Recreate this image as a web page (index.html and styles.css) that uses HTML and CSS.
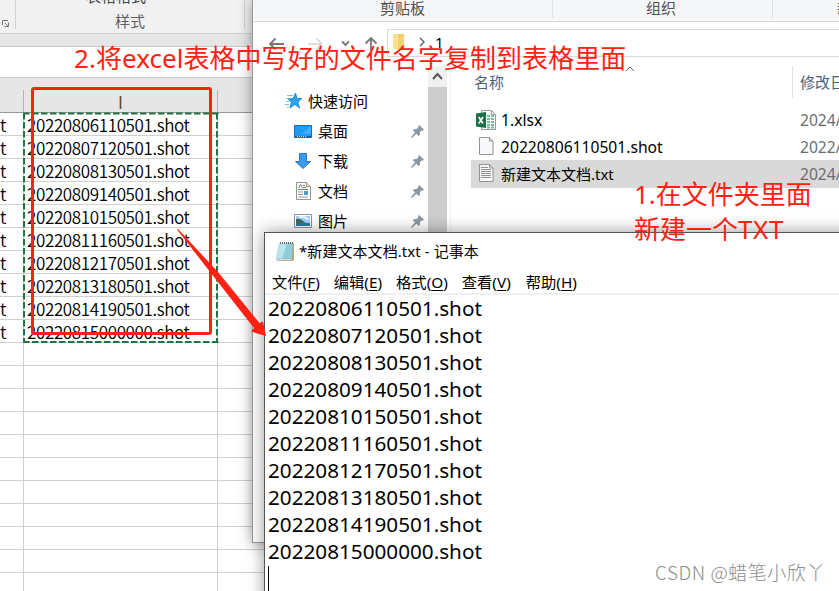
FILE: index.html
```html
<!DOCTYPE html>
<html lang="zh-CN">
<head>
<meta charset="utf-8">
<title>记事本</title>
<link rel="stylesheet" href="styles.css">
</head>
<body>
<svg class="defs" width="0" height="0">
  <symbol id="pin" viewBox="0 0 13 13"><path d="M8.200 0 13 4.800 11.600 5.700 10.600 5.500 8.900 7.300 9 9.800 7.700 11 5.300 8.700 1.200 12.700.2 12.800.3 11.700 4 7.300 1.800 5.200 3.100 4 5.300 4.200 7.400 2.300 7.300 1Z" fill="#8d979f"/></symbol>
</svg>
<main class="desktop">
  <section class="excel">
    <div class="ribbon">
      <div class="ribbon-left"><svg width="9" height="9" viewBox="0 0 9 9"><path d="M1.500 6V1.500H7M4 4 7 7M7.500 3.500V7.500H3.500" fill="none" stroke="#777"/></svg></div>
      <div class="ribbon-styles"><span class="cut">表格格式</span><span>样式</span></div>
      <div class="ribbon-right"></div>
    </div>
    <div class="gap"></div>
    <div class="formula"></div>
    <div class="cols"><i></i><b>I</b><i></i></div>
    <div class="grid">
      <div class="row"><i>ot</i><b>20220806110501.shot</b><i></i></div>
      <div class="row"><i>ot</i><b>20220807120501.shot</b><i></i></div>
      <div class="row"><i>ot</i><b>20220808130501.shot</b><i></i></div>
      <div class="row"><i>ot</i><b>20220809140501.shot</b><i></i></div>
      <div class="row"><i>ot</i><b>20220810150501.shot</b><i></i></div>
      <div class="row"><i>ot</i><b>20220811160501.shot</b><i></i></div>
      <div class="row"><i>ot</i><b>20220812170501.shot</b><i></i></div>
      <div class="row"><i>ot</i><b>20220813180501.shot</b><i></i></div>
      <div class="row"><i>ot</i><b>20220814190501.shot</b><i></i></div>
      <div class="row"><i>ot</i><b>20220815000000.shot</b><i></i></div>
      <div class="row"><i></i><b></b><i></i></div>
      <div class="row"><i></i><b></b><i></i></div>
      <div class="row"><i></i><b></b><i></i></div>
      <div class="row"><i></i><b></b><i></i></div>
      <div class="row"><i></i><b></b><i></i></div>
      <div class="row"><i></i><b></b><i></i></div>
      <div class="row"><i></i><b></b><i></i></div>
      <div class="row"><i></i><b></b><i></i></div>
      <div class="row"><i></i><b></b><i></i></div>
      <div class="row"><i></i><b></b><i></i></div>
      <div class="row"><i></i><b></b><i></i></div>
    </div>
    <svg class="ants" width="196" height="232" viewBox="0 0 196 232"><path d="M0 1.500H196M0 230H196M1 1V231M194 1V231" fill="none" stroke="#217346" stroke-width="2" stroke-dasharray="6.500 2.500"/></svg>
  </section>

  <section class="explorer">
    <div class="ex-ribbon"><span class="g1">剪贴板</span><span class="g2">组织</span><span class="g3">新建</span></div>
    <div class="nav">
      <svg class="arrows" width="134" height="34" viewBox="0 0 134 34">
        <g fill="none" stroke="#777" stroke-width="1.800"><path d="M31 22H17M22.500 16.500 17 22 22.500 27.500"/><path d="M55 22H69M63.500 16.500 69 22 63.500 27.500" stroke="#dcdcdc"/><path d="M89 19.500 92.500 23 96 19.500"/><path d="M118 28V16M112.500 21.500 118 16 123.500 21.500"/></g>
      </svg>
      <div class="address">
        <svg width="14" height="18" viewBox="0 0 14 18"><path d="M0 1H11V14H0Z" fill="#f4cc62"/><path d="M0 1H5V17L0 15Z" fill="#fbe08f"/><path d="M5 3H11V14L5 17Z" fill="#f6d06e"/></svg>
        <svg class="chev" width="8" height="12" viewBox="0 0 8 12"><path d="M2 2 6 6 2 10" fill="none" stroke="#666" stroke-width="1.500"/></svg>
        <span>1</span>
      </div>
    </div>
    <div class="ex-body">
      <div class="tree">
        <div class="item top"><svg width="18" height="18" viewBox="0 0 18 18"><path d="M10.500 1 12 6.300 17 6.500 13 10 14.500 16 9.800 12.500 5 16 6.300 10.300 3 7 8.200 6.300Z" fill="#2ba5ee" stroke="#1681c6" stroke-width=".8"/><path d="M2 3.500H8M1 6.500H4M1 9.500H4M0 12.500H4M2 15H4" stroke="#70c5ef" stroke-width="1"/></svg><span>快速访问</span></div>
        <div class="item"><svg width="18" height="18" viewBox="0 0 18 18"><path d="M.5 3.500H17.500V15.500H.5Z" fill="#1e9bf3" stroke="#0b72bd"/><path d="M17 4 8 12H17Z" fill="#43b2fc"/><path d="M1 14.500H17" stroke="#065c9d"/><path d="M3 14.500H13" stroke="#c4e7ff" stroke-dasharray="1 1"/></svg><span>桌面</span><svg class="pin"><use href="#pin"/></svg></div>
        <div class="item"><svg width="18" height="18" viewBox="0 0 18 18"><path d="M5.500 1.500H12.500V9.500H16.500L9 16.500 1.500 9.500H5.500Z" fill="#3c9aec" stroke="#2878bf"/></svg><span>下载</span><svg class="pin"><use href="#pin"/></svg></div>
        <div class="item"><svg width="18" height="18" viewBox="0 0 18 18"><path d="M2.500.5H12.500L16.500 4.500V17.500H2.500Z" fill="#fff" stroke="#949494"/><path d="M12.500.5V4.500H16.500" fill="#ddd" stroke="#949494"/><path d="M4.500 6 6.500 2.500 8.500 6M9 3.500H11M9 5.500H12M4 7.500H14" fill="none" stroke="#2090d0"/><path d="M4 10H9M4 12.500H9M4 15H14" stroke="#999"/><path d="M10 9H14V13H10Z" fill="#4c9fc9"/></svg><span>文档</span><svg class="pin"><use href="#pin"/></svg></div>
        <div class="item"><svg width="18" height="18" viewBox="0 0 18 18"><path d="M.5 2.500H17.500V15.500H.5Z" fill="#fff" stroke="#929292"/><path d="M2 4H16V14H2Z" fill="#9dcfff"/><path d="M2 7Q6 6 9 9T16 11V14H2Z" fill="#426a5f"/><path d="M2 12Q9 10 16 12V14H2Z" fill="#297ca3"/><path d="M5 5Q10 4 15 8" stroke="#e8f6ff" stroke-width="2" fill="none"/></svg><span>图片</span><svg class="pin"><use href="#pin"/></svg></div>
      </div>
      <div class="scroll"><svg width="19" height="21" viewBox="0 0 19 21"><path d="M5 13 9.500 8 14 13" fill="none" stroke="#555" stroke-width="2"/></svg><div class="thumb"></div></div>
      <div class="files">
        <div class="fhead"><span class="n">名称</span><span class="d">修改日期</span>
          <svg class="sort" width="10" height="6" viewBox="0 0 10 6"><path d="M1 5 5 1 9 5" fill="none" stroke="#666"/></svg></div>
        <div class="file"><svg width="20" height="20" viewBox="0 0 20 20"><path d="M5.500.5H15.500L19.500 4.500V19.500H5.500Z" fill="#fff" stroke="#999"/><path d="M15.500.5V4.500H19.500" fill="none" stroke="#999"/><path d="M11 6H18M11 9H18M11 12H18M11 15H18M11 17.500H18" stroke="#7fb99b" stroke-width="2" stroke-dasharray="3 1"/><path d="M0 3.500 10 2V18L0 16.500Z" fill="#1b7145"/><path d="M2.800 7 7 13.500M7 7 2.800 13.500" stroke="#fff" stroke-width="1.600"/></svg><span>1.xlsx</span><em>2024/</em></div>
        <div class="file"><svg width="20" height="20" viewBox="0 0 20 20"><path d="M3.500.5H13.500L17 4V17.500H3.500Z" fill="#f8f8fa" stroke="#929292"/><path d="M13.500.5V4H17" fill="#ddd" stroke="#929292"/></svg><span>20220806110501.shot</span><em>2022/</em></div>
        <div class="file sel"><svg width="20" height="20" viewBox="0 0 20 20"><path d="M3.500.5H13.500L17 4V17.500H3.500Z" fill="#f8f8fa" stroke="#929292"/><path d="M13.500.5V4H17M5 3.500H12M5 5.500H15M5 7.500H15M5 9.500H15M5 11.500H15M5 13.500H15" fill="none" stroke="#929292"/></svg><span>新建文本文档.txt</span><em>2024/</em></div>
      </div>
    </div>
  </section>

  <section class="notepad">
    <div class="title"><svg width="20" height="21" viewBox="0 0 20 21"><path d="M5 3 19 2 19 19 17 20H3Z" fill="#b9a57c"/><path d="M4 2H18L16.500 18 1 18Z" fill="#8fcddb"/><path d="M4 2H12L7 18H1Z" fill="#b8e4ed"/><path d="M1 18H16.500L17 19.500H2Z" fill="#eee" stroke="#9a9a9a" stroke-width=".5"/><path d="M5 2H18" stroke="#667" stroke-width="2" stroke-dasharray="1 1"/></svg><span>*新建文本文档.txt - 记事本</span></div>
    <div class="menu"><span>文件(<u>F</u>)</span><span>编辑(<u>E</u>)</span><span>格式(<u>O</u>)</span><span>查看(<u>V</u>)</span><span>帮助(<u>H</u>)</span></div>
    <div class="text">
      <p>20220806110501.shot</p><p>20220807120501.shot</p><p>20220808130501.shot</p><p>20220809140501.shot</p><p>20220810150501.shot</p><p>20220811160501.shot</p><p>20220812170501.shot</p><p>20220813180501.shot</p><p>20220814190501.shot</p><p>20220815000000.shot</p>
      <div class="caret"></div>
    </div>
  </section>

  <svg class="marks" width="839" height="591" viewBox="0 0 839 591"><rect x="32.500" y="88.500" width="178" height="245" rx="1.500" fill="none" stroke="#ff2113" stroke-width="3"/><path d="M177 229.500 178 229 218 272 259.500 323 263 321.500 266 336 251 331.500 254 328 214 277Z" fill="#ff2113"/></svg>
  <div class="note two">2.将excel表格中写好的文件名字复制到表格里面</div>
  <div class="note one">1.在文件夹里面<br>新建一个<span class="txt">TXT</span></div>
  <div class="watermark">CSDN @蜡笔小欣丫</div>
</main>
</body>
</html>
```
FILE: styles.css
```css
* { box-sizing: border-box; }
body { margin: 0; font-family: "Noto Sans", "Noto Sans CJK SC", sans-serif; color: #000; }
.defs { position: absolute; }
.desktop { position: relative; width: 839px; height: 591px; overflow: hidden; background: #fff; white-space: nowrap; }
p { margin: 0; }
i, b, em { font-style: normal; font-weight: 400; }

.excel { position: absolute; left: 0; top: 0; width: 264px; height: 591px; overflow: hidden; font-family: "Noto Sans CJK SC", sans-serif; }
.ribbon { display: flex; height: 34px; background: #f1f1f1; border-bottom: 1px solid #d2d2d2; font-size: 15px; color: #5f5f5f; }
.ribbon-left { width: 16px; height: 29px; padding: 19px 0 0 1px; border-right: 1px solid #d2d2d2; line-height: 0; }
.ribbon-styles { width: 229px; height: 29px; border-right: 1px solid #d2d2d2; display: flex; flex-direction: column; align-items: center; }
.ribbon-styles span { line-height: 22px; height: 22px; margin-top: 3px; }
.ribbon-styles .cut { margin: -15px 28px 0 0; flex: none; color: #444; }
.gap { height: 13px; background: #e6e6e6; border-bottom: 1px solid #c6c6c6; }
.formula { height: 31px; border-bottom: 1px solid #c6c6c6; }
.cols { display: flex; height: 35px; padding-top: 12px; background: #e6e6e6; border-bottom: 1px solid #999; }
.cols i:first-child, .row i:first-child { width: 24px; border-right: 1px solid #d0d0d0; }
.cols b, .row b { width: 194px; border-right: 1px solid #d0d0d0; }
.cols i:first-child, .cols b { border-color: #b3b3b3; }
.cols b { text-align: center; font-size: 17px; line-height: 23px; color: #6b4a20; }
.row { display: flex; height: 23px; border-bottom: 1px solid #d0d0d0; font-size: 17px; line-height: 24px; letter-spacing: -.18px; color: #000; }
.row i:first-child { display: flex; justify-content: flex-end; padding-right: 17px; font-weight: 350; }
.row b { padding-left: 3px; font-weight: 350; letter-spacing: -.37px; }
.ants { position: absolute; left: 23px; top: 112px; }

.explorer { position: absolute; left: 252px; top: 0; width: 587px; height: 543px; background: #fff; border-left: 1px solid #999; border-bottom: 1px solid #999; box-shadow: 0 0 14px rgba(0,0,0,.4); font-size: 15px; }
.ex-ribbon { display: flex; height: 22px; background: #f5f6f7; border-bottom: 1px solid #dadbdc; color: #505050; line-height: 16px; }
.ex-ribbon span { height: 18px; text-align: center; border-right: 1px solid #e0e1e2; }
.g1 { width: 300px; }
.g2 { width: 220px; padding-right: 3px; }
.ex-ribbon .g3 { width: 66px; text-align: left; padding-left: 64px; overflow: hidden; border: 0; }
.nav { display: flex; height: 44px; }
.arrows { flex: none; }
.address { display: flex; flex: 1; height: 28px; margin-top: 7px; border: 1px solid #d9d9d9; border-right: 0; padding: 3px 0 0 5px; }
.address .chev { margin: 3px 0 0 11px; }
.address span { margin-left: 9px; line-height: 18px; }
.ex-body { display: flex; height: 476px; }
.tree { width: 175px; padding-top: 20px; }
.item { display: flex; height: 30px; align-items: center; padding-left: 41px; }
.item.top { padding-left: 32px; }
.item span { margin-left: 6px; padding-bottom: 2px; }
.item.top span { margin-left: 5px; }
.item > svg { flex: none; }
.item .pin { width: 13px; height: 13px; margin: 0 4px 0 auto; }
.scroll { width: 19px; background: #f0f0f0; line-height: 0; }
.thumb { height: 455px; background: #cdcdcd; }
.files { flex: 1; min-width: 0; margin-left: 3px; border-left: 1px solid #f3f3f3; padding-left: 20px; overflow: hidden; }
.fhead { position: relative; display: flex; height: 32px; line-height: 32px; color: #4c607a; margin-bottom: 9px; }
.fhead .n { flex: none; width: 322px; padding-left: 3px; border-right: 1px solid #e0e0e0; }
.fhead .d { padding-left: 7px; }
.sort { position: absolute; left: 154px; top: 0; }
.file { display: flex; height: 26px; align-items: center; padding-left: 5px; }
.file + .file { height: 27px; }
.file.sel { height: 28px !important; background: #d9d9d9; }
.file svg { flex: none; }
.file span { flex: none; width: 299px; margin-left: 5px; font-size: 15.650px; }
.file.sel span { font-size: 15px; padding-bottom: 1px; }
.file em { color: #6d6d6d; font-size: 15.600px; }

.notepad { position: absolute; left: 264px; top: 232px; width: 600px; height: 400px; background: #fff; border: 1px solid #555; box-shadow: 0 0 16px rgba(0,0,0,.4); }
.title { display: flex; height: 36px; padding: 8px 0 0 10px; font-size: 15px; line-height: 21px; }
.title span { margin-left: 4px; letter-spacing: .07px; }
.menu { display: flex; gap: 14px; height: 26px; padding-left: 7px; border-bottom: 2px solid #f0f0f0; font-size: 15.300px; line-height: 26px; }
.menu span:nth-child(5) { margin-left: 1px; }
.menu u { text-underline-offset: 2px; text-decoration-thickness: 1px; }
.text { padding-left: 3px; font-size: 20.700px; line-height: 27px; }
.caret { width: 1px; height: 27px; margin-top: 1px; background: #000; }

.marks { position: absolute; left: 0; top: 0; }
.note { position: absolute; color: #ff2113; font-size: 26px; line-height: 35px; }
.note.two { left: 74px; top: 41px; letter-spacing: .05px; }
.note.one { left: 634px; top: 177px; }
.txt { letter-spacing: .6px; }
.watermark { position: absolute; left: 655px; top: 559px; font-family: "Noto Sans CJK SC", sans-serif; font-size: 19px; font-weight: 300; letter-spacing: .5px; line-height: 26px; color: #8c8c8c; }
```
